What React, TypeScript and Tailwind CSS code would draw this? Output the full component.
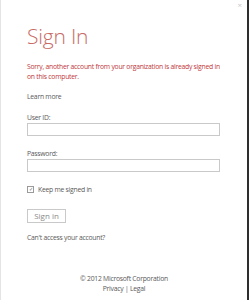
export default function App() {
  return (
    <div
      className="relative flex flex-col w-[249px] h-[300px] bg-white border-l border-[#e4e4e4] border-r-2 border-r-[#2e2e2e] overflow-hidden"
      style={{ fontFamily: '"Open Sans", "Noto Sans", sans-serif' }}
    >
      {/* close */}
      <span className="absolute right-[5px] top-[1px] text-[8px] leading-none text-[#c8c8c8]">
        ×
      </span>

      <div className="flex flex-col pl-[26px] pr-[26px] pt-[23px] text-[6.8px] leading-[9px] text-[#5a5a5a] tracking-[-0.25px]">
        <h1 className="text-[21px] leading-[26px] font-light text-[#c86a66] tracking-[-0.2px]">
          Sign In
        </h1>
        <p className="mt-[13px] text-[#c0373d] leading-[10px]">
          Sorry, another account from your organization is already signed in
          on this computer.
        </p>

        <div className="mt-[10px]">Learn more</div>

        <label className="mt-[12px]">User ID:</label>
        <div className="mt-[1px] h-[13px] w-[193px] border border-[#c9c9c9] bg-white" />

        <label className="mt-[13px]">Password:</label>
        <div className="mt-[1px] h-[13px] w-[193px] border border-[#c9c9c9] bg-white" />

        <div className="mt-[13px] flex items-center gap-[4px]">
          <span className="flex h-[7px] w-[7px] items-center justify-center border border-[#9a9a9a] text-[5px] leading-none text-[#666]">
            ✓
          </span>
          Keep me signed in
        </div>

        <button className="mt-[15px] h-[14px] w-[39px] border border-[#c9c9c9] bg-white text-[8px] leading-none text-[#8a8a8a] tracking-normal">
          Sign in
        </button>

        <div className="mt-[10px]">Can't access your account?</div>
      </div>

      <div className="mt-auto pb-[6px] flex flex-col items-center text-[6.8px] leading-[10px] text-[#5a5a5a] tracking-[-0.25px]">
        <span>© 2012 Microsoft Corporation</span>
        <span>Privacy | Legal</span>
      </div>
    </div>
  );
}
